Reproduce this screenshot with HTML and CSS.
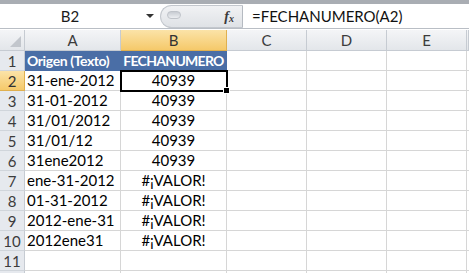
FILE: index.html
```html
<!DOCTYPE html>
<html lang="es">
  <head>
    <meta charset="UTF-8" />
    <meta name="viewport" content="width=device-width, initial-scale=1.0" />
    <link rel="stylesheet" href="styles.css">
    <title>FECHANUMERO</title>
  </head>

  <body>
    <div class="formulaBar">
      <div class="nameBox">
        <span class="nameText">B2</span>
        <span class="dropArrow"></span>
      </div>
      <div class="grip">
        <span class="knob"></span>
        <span class="fx">f<sub>x</sub></span>
      </div>
      <div class="formulaInput">=FECHANUMERO(A2)</div>
    </div>

    <div class="sheet">
      <div class="row colHeads">
        <div class="corner"><span class="cornerTri"></span></div>
        <div class="colHead">A</div>
        <div class="colHead selected">B</div>
        <div class="colHead">C</div>
        <div class="colHead">D</div>
        <div class="colHead">E</div>
        <div class="colHead"></div>
      </div>
      <div class="row">
        <div class="rowHead">1</div>
        <div class="cell tableHead">Origen (Texto)</div>
        <div class="cell tableHead center">FECHANUMERO</div>
        <div class="cell"></div><div class="cell"></div><div class="cell"></div><div class="cell"></div>
      </div>
      <div class="row">
        <div class="rowHead selected">2</div>
        <div class="cell">31-ene-2012</div>
        <div class="cell center active">40939</div>
        <div class="cell"></div><div class="cell"></div><div class="cell"></div><div class="cell"></div>
      </div>
      <div class="row">
        <div class="rowHead">3</div>
        <div class="cell">31-01-2012</div>
        <div class="cell center">40939</div>
        <div class="cell"></div><div class="cell"></div><div class="cell"></div><div class="cell"></div>
      </div>
      <div class="row">
        <div class="rowHead">4</div>
        <div class="cell">31/01/2012</div>
        <div class="cell center">40939</div>
        <div class="cell"></div><div class="cell"></div><div class="cell"></div><div class="cell"></div>
      </div>
      <div class="row">
        <div class="rowHead">5</div>
        <div class="cell">31/01/12</div>
        <div class="cell center">40939</div>
        <div class="cell"></div><div class="cell"></div><div class="cell"></div><div class="cell"></div>
      </div>
      <div class="row">
        <div class="rowHead">6</div>
        <div class="cell">31ene2012</div>
        <div class="cell center">40939</div>
        <div class="cell"></div><div class="cell"></div><div class="cell"></div><div class="cell"></div>
      </div>
      <div class="row">
        <div class="rowHead">7</div>
        <div class="cell">ene-31-2012</div>
        <div class="cell center">#¡VALOR!</div>
        <div class="cell"></div><div class="cell"></div><div class="cell"></div><div class="cell"></div>
      </div>
      <div class="row">
        <div class="rowHead">8</div>
        <div class="cell">01-31-2012</div>
        <div class="cell center">#¡VALOR!</div>
        <div class="cell"></div><div class="cell"></div><div class="cell"></div><div class="cell"></div>
      </div>
      <div class="row">
        <div class="rowHead">9</div>
        <div class="cell">2012-ene-31</div>
        <div class="cell center">#¡VALOR!</div>
        <div class="cell"></div><div class="cell"></div><div class="cell"></div><div class="cell"></div>
      </div>
      <div class="row">
        <div class="rowHead">10</div>
        <div class="cell">2012ene31</div>
        <div class="cell center">#¡VALOR!</div>
        <div class="cell"></div><div class="cell"></div><div class="cell"></div><div class="cell"></div>
      </div>
      <div class="row">
        <div class="rowHead">11</div>
        <div class="cell"></div><div class="cell"></div><div class="cell"></div>
        <div class="cell"></div><div class="cell"></div><div class="cell"></div>
      </div>
      <div class="row rowStub">
        <div class="rowHead"></div>
        <div class="cell"></div><div class="cell"></div><div class="cell"></div>
        <div class="cell"></div><div class="cell"></div><div class="cell"></div>
      </div>
    </div>
  </body>
</html>
```

FILE: styles.css
```css
body {
  margin: 0px;
  background-color: #ffffff;
  font-family: Lato, "Open Sans", sans-serif;
  font-size: 15px;
  color: #000000;
  overflow: hidden;
}

/* formula bar */
.formulaBar {
  display: flex;
  height: 29px;
  box-sizing: border-box;
  border-top: 4px solid #a9adb3;
  border-bottom: 1px solid #b9bec5;
  background-color: #ffffff;
}
.nameBox {
  position: relative;
  display: flex;
  align-items: center;
  justify-content: center;
  width: 160px;
  color: #1a1a1a;
}
.nameText {
  margin-right: 20px;
}
.dropArrow {
  position: absolute;
  right: 6px;
  top: 10px;
  width: 0px;
  height: 0px;
  border-left: 4px solid transparent;
  border-right: 4px solid transparent;
  border-top: 4px solid #333333;
}
.grip {
  display: flex;
  align-items: center;
  justify-content: space-between;
  width: 83px;
  box-sizing: border-box;
  margin-top: 1px;
  padding: 0px 8px 0px 6px;
  background: linear-gradient(#f1f2f4, #dfe2e6);
  border: 1px solid #c3c7cd;
  border-right: 1px solid #b5bac1;
  border-radius: 12px 0px 0px 12px;
}
.knob {
  width: 12px;
  height: 6px;
  margin-top: -4px;
  border-radius: 6px;
  background: linear-gradient(#c8ccd2, #eceef1);
  border: 1px solid #bfc3c9;
}
.fx {
  font-family: "Liberation Serif", serif;
  font-style: italic;
  font-weight: bold;
  font-size: 14px;
  color: #3a3a3a;
}
.fx sub {
  font-size: 10px;
  vertical-align: -1px;
}
.formulaInput {
  flex: 1;
  display: flex;
  align-items: center;
  padding-left: 9px;
  color: #111111;
}

/* grid */
.sheet {
  display: flex;
  flex-direction: column;
}
.row {
  display: grid;
  grid-template-columns: 25px 96px 106px 80px 80px 80px 1fr;
  height: 20px;
}
.row.rowStub {
  height: 3px;
}
.colHeads {
  height: 21px;
  border-top: 1px solid #ffffff;
}
.corner,
.colHead,
.rowHead {
  display: flex;
  align-items: center;
  justify-content: center;
  box-sizing: border-box;
  background: linear-gradient(#f4f5f7, #e3e6ea);
  color: #3c3c3c;
  border-right: 1px solid #c6cbd2;
  border-bottom: 1px solid #c6cbd2;
}
.rowHead {
  background: #e6e9ee;
  border-bottom: 1px solid #d0d5db;
}
.corner {
  position: relative;
}
.cornerTri {
  position: absolute;
  right: 3px;
  bottom: 3px;
  width: 0px;
  height: 0px;
  border-left: 11px solid transparent;
  border-bottom: 11px solid #c2c6cc;
}
.colHead.selected,
.rowHead.selected {
  background: linear-gradient(#fbe3a8, #f5c96a);
  border-right: 1px solid #e0b04f;
  border-bottom: 1px solid #e0b04f;
  color: #333333;
}
.cell {
  box-sizing: border-box;
  border-right: 1px solid #d6d6d6;
  border-bottom: 1px solid #d6d6d6;
  padding: 0px 2px;
  line-height: 19px;
  white-space: nowrap;
  overflow: visible;
}
.center {
  text-align: center;
}
.tableHead {
  background-color: #4a6ea6;
  color: #ffffff;
  font-weight: bold;
  font-size: 14px;
  border-right: 1px solid #4a6ea6;
  border-bottom: 1px solid #4a6ea6;
  letter-spacing: -0.4px;
}
.tableHead.center {
  letter-spacing: -0.7px;
  padding: 0px;
}
.active {
  position: relative;
  outline: 2px solid #000000;
  outline-offset: -1px;
}
.active::after {
  content: "";
  position: absolute;
  right: -4px;
  bottom: -4px;
  width: 5px;
  height: 5px;
  background-color: #000000;
  border: 1px solid #ffffff;
}
```
